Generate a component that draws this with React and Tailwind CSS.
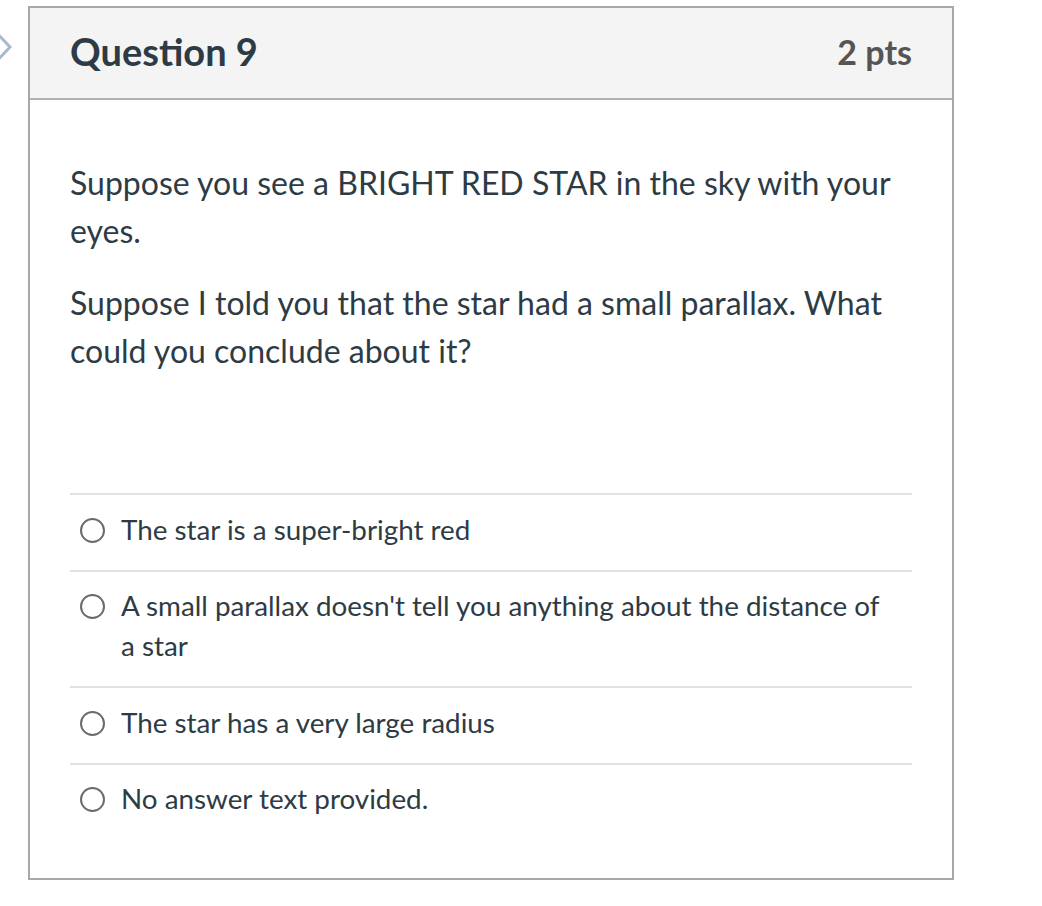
export default function App() {
  const answers = [
    "The star is a super-bright red",
    "A small parallax doesn't tell you anything about the distance of a star",
    "The star has a very large radius",
    "No answer text provided.",
  ];

  return (
    <div className="w-[1042px] h-[906px] bg-white relative" style={{ fontFamily: "Lato, 'Liberation Sans', sans-serif" }}>
      {/* left nav chevron */}
      <svg className="absolute left-[-8px] top-[28px]" width="22" height="40" viewBox="0 0 22 40">
        <path d="M2 2 L18 19 L2 36" fill="none" stroke="#a9b9c9" strokeWidth="3" />
      </svg>

      <div className="pt-[6px] pl-[28px]">
        <div className="w-[926px] h-[874px] border-2 border-[#a8a8a8] flex flex-col">
          <div className="h-[92px] bg-[#f4f4f4] border-b-2 border-[#b0b0b0] flex items-center justify-between pl-[40px] pr-[40px] shrink-0">
            <div className="text-[38px] font-bold text-[#2d3b45] pb-[3px]">Question 9</div>
            <div className="text-[34px] font-bold text-[#555555] pb-[3px]">2 pts</div>
          </div>

          <div className="px-[40px] pt-[59px] text-[#2d3b45]">
            <p className="text-[32px] leading-[48px]">
              Suppose you see a BRIGHT RED STAR in the sky with your eyes.
            </p>
            <p className="text-[32px] leading-[48px] mt-[24px]">
              Suppose I told you that the star had a small parallax. What could you conclude about it?
            </p>

            <div className="mt-[118px]">
              {answers.map((a, i) => (
                <div key={i} className="border-t-2 border-[#e1e1e1] flex items-start pl-[10px] pt-[14.5px] pb-[20px]">
                  <span className="w-[25px] h-[25px] rounded-full border-2 border-[#6b6b6b] shrink-0 mt-[8px]" />
                  <span className="ml-[16px] text-[27.8px] leading-[40px] text-[#2d3b45] pr-[20px]">{a}</span>
                </div>
              ))}
            </div>
          </div>
        </div>
      </div>
    </div>
  );
}
